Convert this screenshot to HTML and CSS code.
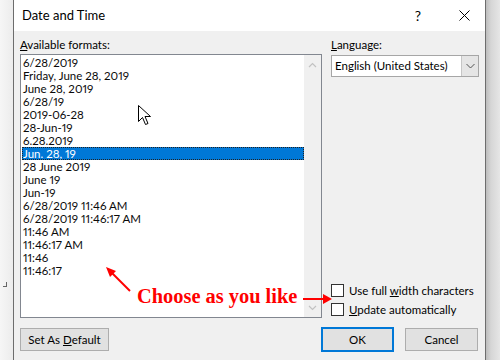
FILE: index.html
```html
<!DOCTYPE html>
<html>
<head>
<meta charset="utf-8">
<link rel="stylesheet" href="styles.css">
</head>
<body>
<div class="desktop">
  <div class="gutter"><span class="mark"></span></div>
  <div class="dialog">
    <div class="titlebar">
      <span class="title">Date and Time</span>
      <span class="help">?</span>
      <span class="close">
        <svg width="11" height="11" viewBox="0 0 11 11"><path d="M0.5 0.5L10.5 10.5M10.5 0.5L0.5 10.5" stroke="#000" stroke-width="1" fill="none"/></svg>
      </span>
    </div>
    <div class="body">
      <div class="columns">
        <div class="col-left">
          <div class="label"><u>A</u>vailable formats:</div>
          <div class="listbox">
            <ul class="items">
              <li>6/28/2019</li>
              <li>Friday, June 28, 2019</li>
              <li>June 28, 2019</li>
              <li>6/28/19</li>
              <li>2019-06-28</li>
              <li>28-Jun-19</li>
              <li>6.28.2019</li>
              <li class="selected">Jun. 28, 19</li>
              <li>28 June 2019</li>
              <li>June 19</li>
              <li>Jun-19</li>
              <li>6/28/2019 11:46 AM</li>
              <li>6/28/2019 11:46:17 AM</li>
              <li>11:46 AM</li>
              <li>11:46:17 AM</li>
              <li>11:46</li>
              <li>11:46:17</li>
            </ul>
            <div class="scrollbar">
              <svg width="17" height="10" viewBox="0 0 17 10"><path d="M5 7L8.5 3.5L12 7" stroke="#c2c2c2" stroke-width="1.2" fill="none"/></svg>
              <svg width="17" height="10" viewBox="0 0 17 10"><path d="M5 3L8.5 6.5L12 3" stroke="#c2c2c2" stroke-width="1.2" fill="none"/></svg>
            </div>
          </div>
        </div>
        <div class="col-right">
          <div class="label"><u>L</u>anguage:</div>
          <div class="select">
            <span class="select-text">English (United States)</span>
            <span class="select-btn">
              <svg width="9" height="6" viewBox="0 0 9 6"><path d="M0.5 1L4.5 5L8.5 1" stroke="#555" stroke-width="1" fill="none"/></svg>
            </span>
          </div>
          <div class="checks">
            <label class="check"><span class="box"></span><span>Use full <u>w</u>idth characters</span></label>
            <label class="check"><span class="box"></span><span><u>U</u>pdate automatically</span></label>
          </div>
        </div>
      </div>
      <div class="footer">
        <button class="btn btn-default">Set As <u>D</u>efault</button>
        <div class="spacer"></div>
        <button class="btn btn-ok">OK</button>
        <button class="btn btn-cancel">Cancel</button>
      </div>
    </div>
  </div>
  <div class="shadow"></div>
</div>

<div class="note">Choose as you like</div>
<svg class="overlay" width="500" height="360" viewBox="0 0 500 360">
  <g stroke="#ff0000" stroke-width="2" fill="none">
    <path d="M130 291L111 272"/>
    <path d="M303 299L326 299"/>
  </g>
  <g fill="#ff0000">
    <path d="M106 267L116 271L110 277Z"/>
    <path d="M332 299L323 294L323 304Z"/>
  </g>
  <path class="cursor" d="M138.5 105.5V121.5L142.5 117.5L145.5 124.5L148 123.5L145 116.5H150.5Z" fill="#fff" stroke="#000" stroke-width="1"/>
</svg>
</body>
</html>
```

FILE: styles.css
```css
* { box-sizing: border-box; }
html, body { margin: 0; padding: 0; }
body {
  width: 500px;
  height: 360px;
  overflow: hidden;
  position: relative;
  font-family: "Segoe UI", Lato, "Liberation Sans", sans-serif;
  font-size: 11.5px;
  font-variant-numeric: proportional-nums;
  color: #000;
  background: #f2f2f2;
}
.desktop {
  display: flex;
  height: 360px;
}
.gutter {
  width: 13px;
  background: linear-gradient(to right, #f6f6f6, #ececec);
  padding-top: 282px;
  padding-left: 3px;
}
.mark {
  display: block;
  width: 4px;
  height: 5px;
  border-right: 1px solid #666;
  border-bottom: 1px solid #666;
}
.shadow {
  flex: 1;
  background: linear-gradient(to right, #bdbdbd, #d6d6d6 5px, #e6e6e6);
}
.dialog {
  width: 473px;
  border-left: 1px solid #6d6d6d;
  border-right: 1px solid #6d6d6d;
  background: #f0f0f0;
  display: flex;
  flex-direction: column;
}
.titlebar {
  height: 31px;
  background: #fff;
  display: flex;
  align-items: center;
  padding-left: 8px;
}
.title {
  font-size: 13px;
  flex: 1;
  padding-bottom: 1px;
}
.help {
  font-size: 14px;
  width: 40px;
  margin-right: 6px;
  text-align: center;
}
.close {
  width: 40px;
  display: flex;
  justify-content: center;
  margin-right: 1px;
}
.body {
  padding: 6px 6px 0 6px;
}
.columns {
  display: flex;
  gap: 9px;
}
.col-left {
  width: 302px;
  display: flex;
  flex-direction: column;
}
.col-right {
  width: 148px;
  display: flex;
  flex-direction: column;
}
.label {
  height: 16px;
  line-height: 16px;
  margin-bottom: 1px;
}
.listbox {
  height: 264px;
  border: 1px solid #828790;
  background: #fff;
  display: flex;
}
.items {
  list-style: none;
  margin: 0;
  padding: 1px 0 0 1px;
  flex: 1;
}
.items li {
  height: 13px;
  line-height: 13px;
  padding-left: 1px;
  white-space: nowrap;
  color: #0a0a0a;
}
.items li.selected {
  background: #0078d7;
  color: #fff;
  outline: 1px dotted #222;
  outline-offset: -1px;
}
.scrollbar {
  width: 17px;
  background: #f0f0f0;
  display: flex;
  flex-direction: column;
  justify-content: space-between;
  padding: 5px 0 4px;
}
.select {
  margin-top: 1px;
  height: 22px;
  border: 1px solid #a6a6a6;
  background: #fff;
  display: flex;
}
.select-text {
  flex: 1;
  padding-left: 3px;
  line-height: 20px;
}
.select-btn {
  width: 17px;
  background: #e5e5e5;
  border-left: 1px solid #c6c6c6;
  display: flex;
  align-items: center;
  justify-content: center;
}
.checks {
  margin-top: auto;
  margin-bottom: -1px;
  display: flex;
  flex-direction: column;
}
.check {
  height: 19px;
  display: flex;
  align-items: center;
  gap: 5px;
  white-space: nowrap;
}
.box {
  width: 13px;
  height: 13px;
  border: 1px solid #333;
  background: #fff;
  flex: none;
}
.footer {
  margin-top: 9px;
  height: 25px;
  display: flex;
  align-items: center;
  padding-right: 1px;
}
.spacer { flex: 1; }
.btn {
  font: inherit;
  color: #000;
  height: 23px;
  background: #e1e1e1;
  border: 1px solid #adadad;
  padding: 0;
  margin: 0;
}
.btn-default { width: 89px; }
.btn-ok {
  width: 73px;
  height: 25px;
  border: 2px solid #0078d7;
  margin-right: 11px;
}
.btn-cancel { width: 73px; }
.note {
  position: absolute;
  left: 137px;
  top: 284px;
  font-family: "Liberation Serif", serif;
  font-weight: bold;
  font-size: 20.4px;
  line-height: 24px;
  color: #ff0000;
  white-space: nowrap;
}
.overlay {
  position: absolute;
  left: 0;
  top: 0;
  pointer-events: none;
}
```
